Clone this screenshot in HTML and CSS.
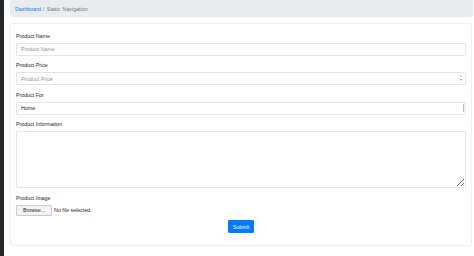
FILE: index.html
```html
<!DOCTYPE html>
<html>
<head>
<meta name="viewport" content="width=device-width, initial-scale=1">
<link rel="stylesheet" href="styles.css">
</head>
<body>

<div class="layout">
  <div class="sidenav"></div>

  <div class="content">
    <ol class="breadcrumb">
      <li><a href="#">Dashboard</a></li>
      <li class="active">/ Static Navigation</li>
    </ol>

    <div class="card">
      <form class="card-body">
        <div class="form-group">
          <label for="pname">Product Name</label>
          <input type="text" class="form-control" id="pname" placeholder="Product Name">
        </div>

        <div class="form-group">
          <label for="pprice">Product Price</label>
          <div class="field">
            <input type="text" class="form-control italic" id="pprice" placeholder="Product Price">
            <span class="spin"><span>&#9652;</span><span>&#9662;</span></span>
          </div>
        </div>

        <div class="form-group">
          <label for="pfor">Product For</label>
          <div class="field">
            <select class="form-control select" id="pfor">
              <option>Home</option>
            </select>
            <span class="drop"></span>
          </div>
        </div>

        <div class="form-group">
          <label for="pinfo">Product Information</label>
          <textarea class="form-control textarea" id="pinfo"></textarea>
        </div>

        <div class="form-group last">
          <label>Product Image</label>
          <div class="file">
            <button type="button" class="browse">Browse...</button>
            <span>No file selected.</span>
          </div>
        </div>

        <div class="submit-row">
          <button type="button" class="btn-primary">Submit</button>
        </div>
      </form>
    </div>
  </div>
</div>

</body>
</html>
```

FILE: styles.css
```css
body {
    margin: 0;
    font-family: "Liberation Sans", Arial, Helvetica, sans-serif;
    font-size: 5.3px;
    line-height: 8px;
    color: #212529;
    background-color: #fff;
}

.layout {
    display: flex;
    height: 256px;
}

/* dark strip of the side menu */
.sidenav {
    width: 4px;
    background-color: #25292d;
    flex-shrink: 0;
}

.content {
    flex: 1;
    padding: 0 1px 0 6px;
}

/* Breadcrumb */
.breadcrumb {
    display: flex;
    gap: 2px;
    list-style: none;
    margin: 0 0 6px 0;
    padding: 5px 5px 4px 5px;
    background-color: #e9ecef;
    border-radius: 0 0 2px 2px;
}

.breadcrumb a {
    color: #007bff;
    text-decoration: none;
}

.breadcrumb .active {
    color: #6c757d;
    word-spacing: 1px;
}

/* Card */
.card {
    border: 1px solid #eef0f2;
    border-radius: 2px;
    margin-top: 2px;
    margin-right: 1px;
}

.card-body {
    padding: 8px 5px 12px 5px;
}

.form-group {
    margin-bottom: 5.8px;
}

.form-group.last {
    margin-bottom: 4.5px;
}

label {
    display: block;
    margin-bottom: 2.7px;
}

.form-control {
    display: block;
    width: 100%;
    height: 13px;
    padding: 0 4px;
    font-family: inherit;
    font-size: 5.3px;
    color: #495057;
    background-color: #fff;
    border: 1px solid #e2e5e8;
    border-radius: 1px;
    box-sizing: border-box;
    outline: none;
}

.form-control::placeholder {
    color: #8a9096;
    opacity: 1;
}

.italic::placeholder {
    font-style: italic;
}

.field {
    position: relative;
}

/* number spinner drawn over the input */
.spin {
    position: absolute;
    right: 4px;
    top: 2px;
    display: flex;
    flex-direction: column;
    font-size: 4px;
    line-height: 4px;
    color: #9aa0a6;
}

.select {
    -webkit-appearance: none;
    appearance: none;
    padding-left: 4px;
    color: #212529;
}

/* little dropdown box on the right edge */
.drop {
    position: absolute;
    right: 0;
    top: 2px;
    width: 2px;
    height: 8px;
    border-left: 1px solid #b8bcc0;
    background-color: #f0f0f0;
}

.textarea {
    height: 57px;
    padding: 2px 4px;
    resize: vertical;
}

.file {
    display: flex;
    align-items: center;
    gap: 2px;
    height: 11px;
}

.browse {
    height: 11px;
    padding: 0 6px;
    font-family: inherit;
    font-size: 5.3px;
    color: #212529;
    background-color: #f3f3f3;
    border: 1px solid #c9c9c9;
    border-radius: 1px;
}

.submit-row {
    display: flex;
    justify-content: center;
}

.btn-primary {
    height: 13px;
    padding: 0 4px;
    font-family: inherit;
    font-size: 5.3px;
    color: #fff;
    background-color: #007bff;
    border: 1px solid #007bff;
    border-radius: 1px;
    cursor: pointer;
}
```
